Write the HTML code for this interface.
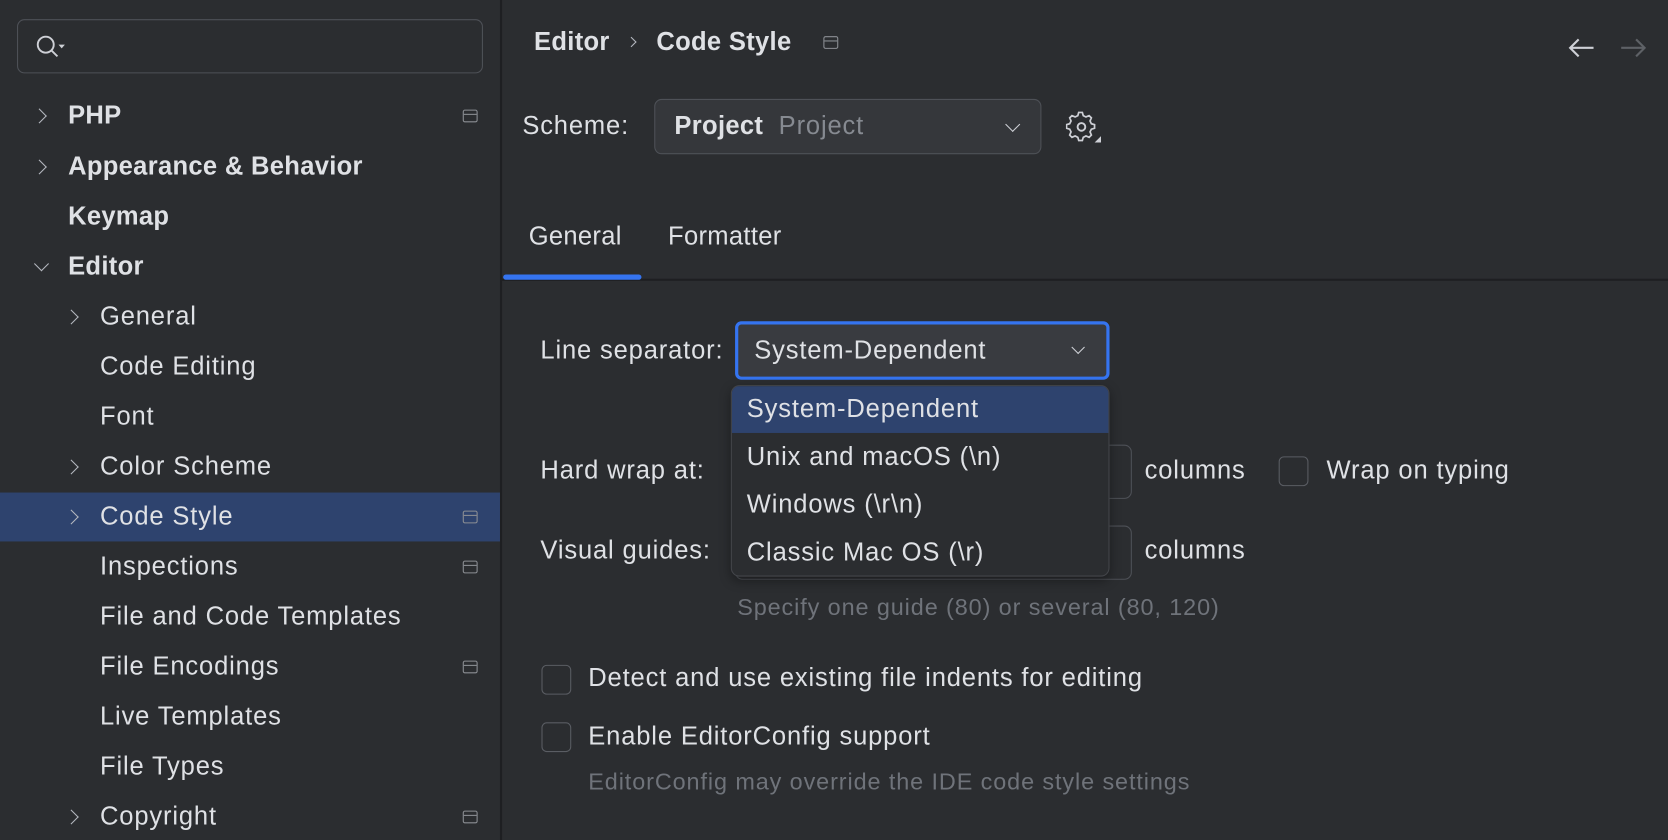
<!DOCTYPE html>
<html><head><meta charset="utf-8"><style>
html,body{margin:0;padding:0;background:#2b2d30;width:1668px;height:840px;overflow:hidden}
#w{position:absolute;left:0;top:0;width:1568px;height:790px;transform-origin:0 0;transform:scale(1.06378);background:#2b2d30;font-family:"Liberation Sans",sans-serif;color:#dfe1e5}
.t{position:absolute;line-height:28px;font-size:24px;white-space:nowrap;letter-spacing:0.8px}
.b{font-weight:bold;letter-spacing:0.3px}
.box{position:absolute;box-sizing:border-box}
.chev{position:absolute;width:9px;height:9px;border-right:1.7px solid #b4b8bf;border-bottom:1.7px solid #b4b8bf}
.r{transform:rotate(-45deg)}
.d{transform:rotate(45deg)}
.ic{position:absolute;width:14px;height:12px;border:1.6px solid #8c8f94;border-radius:2px;box-sizing:border-box}
.ic:after{content:"";position:absolute;left:0;right:0;top:3px;border-top:1.6px solid #8c8f94}
.cb{position:absolute;width:28px;height:28px;border:1.5px solid #5a5d63;border-radius:5px;box-sizing:border-box}
.h{color:#6f737a;font-size:22px;letter-spacing:0.85px}
</style></head><body><div id="w">
<div class="box" style="left:470px;top:0;width:2px;height:790px;background:#1e1f22"></div>
<div class="box" style="left:16px;top:18px;width:438px;height:51px;border:1.5px solid #4e5157;border-radius:7px"></div>
<svg style="position:absolute;left:32px;top:31px" width="34" height="28" viewBox="0 0 34 28"><circle cx="11" cy="11" r="7.5" fill="none" stroke="#ced0d6" stroke-width="1.8"/><path d="M16.5 16.5 L22 22" stroke="#ced0d6" stroke-width="1.8"/><path d="M23 11 L29 11 L26 14.5 Z" fill="#ced0d6"/></svg>
<div class="box" style="left:0;top:463px;width:470px;height:46px;background:#2e436e"></div>
<div class="chev r" style="left:32px;top:104px"></div><div class="t b" style="left:64px;top:95px">PHP</div><div class="ic" style="left:435px;top:103px"></div>
<div class="chev r" style="left:32px;top:152px"></div><div class="t b" style="left:64px;top:143px">Appearance &amp; Behavior</div>
<div class="t b" style="left:64px;top:190px">Keymap</div>
<div class="chev d" style="left:34px;top:243px"></div><div class="t b" style="left:64px;top:237px">Editor</div>
<div class="chev r" style="left:62px;top:293px"></div><div class="t" style="left:94px;top:284px">General</div>
<div class="t" style="left:94px;top:331px">Code Editing</div>
<div class="t" style="left:94px;top:378px">Font</div>
<div class="chev r" style="left:62px;top:434px"></div><div class="t" style="left:94px;top:425px">Color Scheme</div>
<div class="chev r" style="left:62px;top:481px"></div><div class="t" style="left:94px;top:472px">Code Style</div><div class="ic" style="left:435px;top:480px"></div>
<div class="t" style="left:94px;top:519px">Inspections</div><div class="ic" style="left:435px;top:527px"></div>
<div class="t" style="left:94px;top:566px">File and Code Templates</div>
<div class="t" style="left:94px;top:613px">File Encodings</div><div class="ic" style="left:435px;top:621px"></div>
<div class="t" style="left:94px;top:660px">Live Templates</div>
<div class="t" style="left:94px;top:707px">File Types</div>
<div class="chev r" style="left:62px;top:763px"></div><div class="t" style="left:94px;top:754px">Copyright</div><div class="ic" style="left:435px;top:762px"></div>
<div class="t b" style="left:502px;top:26px">Editor</div>
<div class="chev r" style="left:590px;top:36px;width:6px;height:6px;border-width:1.6px"></div>
<div class="t b" style="left:617px;top:26px">Code Style</div>
<div class="ic" style="left:774px;top:34px"></div>
<svg style="position:absolute;left:1472px;top:32px" width="80" height="26" viewBox="0 0 80 26"><path d="M4 13 H26 M12 5 L4 13 L12 21" fill="none" stroke="#ced0d6" stroke-width="2"/><path d="M52 13 H74 M66 5 L74 13 L66 21" fill="none" stroke="#5e6166" stroke-width="2"/></svg>
<div class="t" style="left:491px;top:105px">Scheme:</div>
<div class="box" style="left:615px;top:93px;width:364px;height:52px;border:1.5px solid #4e5157;border-radius:7px;background:#35373b"></div>
<div class="t b" style="left:634px;top:105px">Project</div>
<div class="t" style="left:732px;top:105px;color:#868a91">Project</div>
<div class="chev d" style="left:947px;top:112px;border-color:#ced0d6"></div>
<svg style="position:absolute;left:1002px;top:103px" width="36" height="34" viewBox="0 0 36 34"><path d="M13 2h4l1 3.5 3 1.5 3.5-1.5 2.5 2.5-1.5 3.5 1.5 3 3.5 1v4l-3.5 1-1.5 3 1.5 3.5-2.5 2.5-3.5-1.5-3 1.5-1 3.5h-4l-1-3.5-3-1.5-3.5 1.5-2.5-2.5 1.5-3.5-1.5-3-3.5-1v-4l3.5-1 1.5-3-1.5-3.5 2.5-2.5 3.5 1.5 3-1.5z" transform="translate(1,1) scale(0.85)" fill="none" stroke="#ced0d6" stroke-width="1.9"/><circle cx="14.6" cy="16.3" r="3.6" fill="none" stroke="#ced0d6" stroke-width="1.8"/><path d="M33 25 L33 31 L27 31 Z" fill="#ced0d6"/></svg>
<div class="t" style="left:497px;top:209px;letter-spacing:0.3px">General</div>
<div class="t" style="left:628px;top:209px;letter-spacing:0.3px">Formatter</div>
<div class="box" style="left:472px;top:262px;width:1096px;height:2px;background:#1e1f22"></div>
<div class="box" style="left:473px;top:258px;width:130px;height:5px;background:#3574f0;border-radius:3px"></div>
<div class="t" style="left:508px;top:316px">Line separator:</div>
<div class="box" style="left:691px;top:302px;width:352px;height:55px;border:3px solid #3574f0;border-radius:6px;background:#393b40"></div>
<div class="t" style="left:709px;top:316px">System-Dependent</div>
<div class="chev d" style="left:1009px;top:322px;border-color:#ced0d6;width:8px;height:8px;border-width:1.6px"></div>
<div class="t" style="left:508px;top:429px">Hard wrap at:</div>
<div class="box" style="left:691px;top:418px;width:373px;height:51px;border:1.5px solid #4e5157;border-radius:7px"></div>
<div class="t" style="left:1076px;top:429px">columns</div>
<div class="cb" style="left:1202px;top:429px"></div>
<div class="t" style="left:1247px;top:429px">Wrap on typing</div>
<div class="t" style="left:508px;top:504px">Visual guides:</div>
<div class="box" style="left:691px;top:494px;width:373px;height:51px;border:1.5px solid #4e5157;border-radius:7px"></div>
<div class="t" style="left:1076px;top:504px">columns</div>
<div class="box" style="left:687px;top:362px;width:356px;height:180px;background:#2b2d30;border:1.5px solid #43454a;border-radius:8px;overflow:hidden;box-shadow:0 4px 10px rgba(0,0,0,.35)">
<div style="position:absolute;left:0;top:0;width:100%;height:44px;background:#2e436e"></div></div>
<div class="t" style="left:702px;top:371px">System-Dependent</div>
<div class="t" style="left:702px;top:416px">Unix and macOS (\n)</div>
<div class="t" style="left:702px;top:461px">Windows (\r\n)</div>
<div class="t" style="left:702px;top:506px">Classic Mac OS (\r)</div>
<div class="t h" style="left:693px;top:557px">Specify one guide (80) or several (80, 120)</div>
<div class="cb" style="left:509px;top:625px"></div>
<div class="t" style="left:553px;top:624px">Detect and use existing file indents for editing</div>
<div class="cb" style="left:509px;top:679px"></div>
<div class="t" style="left:553px;top:679px">Enable EditorConfig support</div>
<div class="t h" style="left:553px;top:721px">EditorConfig may override the IDE code style settings</div>
</div></body></html>
